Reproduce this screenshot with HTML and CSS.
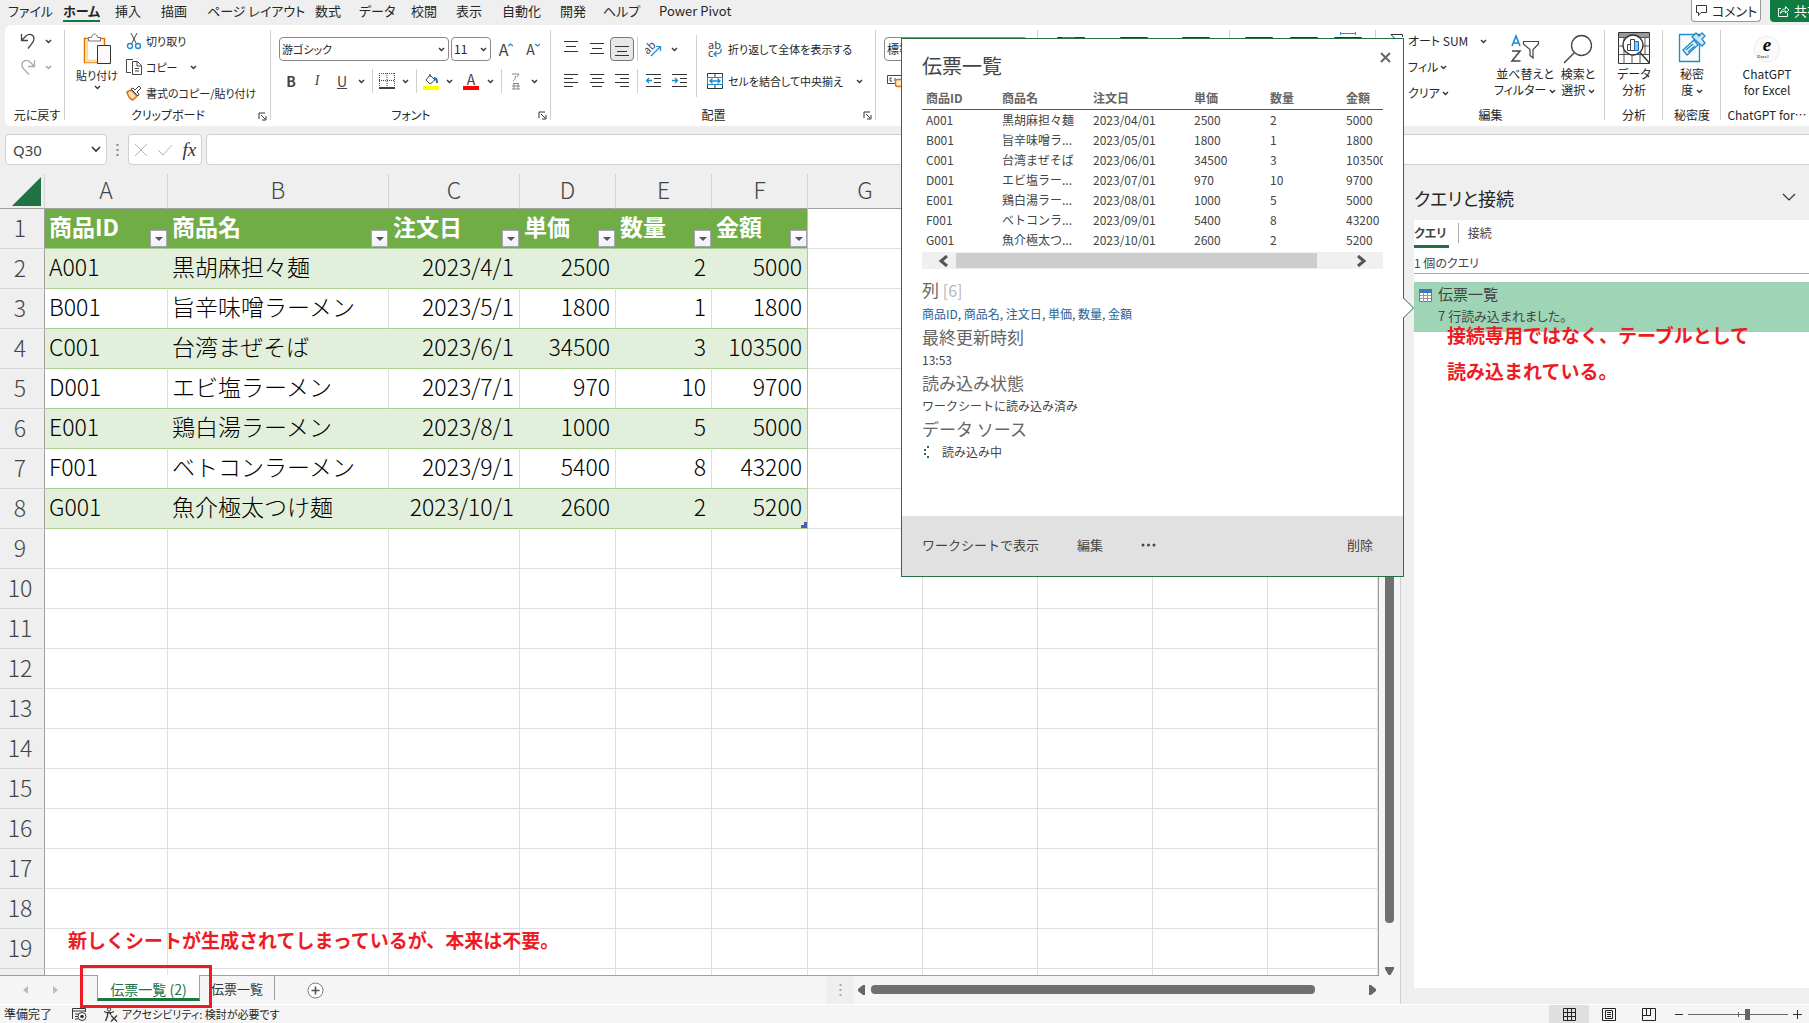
FILE: index.html
```html
<!DOCTYPE html>
<html lang="ja">
<head>
<meta charset="utf-8">
<title>伝票一覧</title>
<link rel="stylesheet" href="styles.css">
</head>
<body>
<svg class="defs" aria-hidden="true">
  <symbol id="chev" viewBox="0 0 7 5"><path d="M1 1l2.500 2.500L6 1" fill="none" stroke="#333" stroke-width="1.400"/></symbol>
  <symbol id="launch" viewBox="0 0 9 9"><path d="M1 7V1h6M3 3l4 4M8 4v4H4" fill="none" stroke="#333"/></symbol>
</svg>

<nav class="topbar">
  <div class="tabs">
    <a href="#">ファイル</a><a href="#" class="on">ホーム</a><a href="#">挿入</a><a href="#">描画</a><a href="#">ページ レイアウト</a><a href="#">数式</a><a href="#">データ</a><a href="#">校閲</a><a href="#">表示</a><a href="#">自動化</a><a href="#">開発</a><a href="#">ヘルプ</a><a href="#">Power Pivot</a>
  </div>
  <div class="actions">
    <button class="comment"><svg width="13" height="13" viewBox="0 0 13 13"><path d="M1.500 1.500h10v7H6l-2.500 3v-3h-2z" fill="none" stroke="#333"/></svg>コメント</button>
    <button class="share"><svg width="13" height="13" viewBox="0 0 13 13"><path d="M4 3.500H1.500v8h9V8M3.500 8.500C4 5 6 4 8.500 4V1.500L12 5 8.500 8V6C6 6 4.500 7 3.500 8.500z" fill="none" stroke="#fff"/></svg>共有</button>
  </div>
</nav>

<section class="ribbon">
  <div class="group g-undo">
    <div class="stack">
      <div class="line"><button class="b20"><svg width="16" height="17" viewBox="0 0 16 17"><path d="M1.500 1v6.500H8M1.500 7.500L6 3c3-3 8-1.500 8 3 0 2.500-1 3.500-6 9.500" fill="none" stroke="#444" stroke-width="1.300"/></svg></button><button class="b20"><svg class="chev"><use href="#chev"/></svg></button></div>
      <div class="line faded"><button class="b20"><svg width="16" height="17" viewBox="0 0 16 17"><path d="M14.500 1v6.500H8M14.500 7.500L10 3C7 0 2 1.500 2 6c0 2.500 1 3.500 7 9.500" fill="none" stroke="#444" stroke-width="1.300"/></svg></button><button class="b20"><svg class="chev"><use href="#chev"/></svg></button></div>
    </div>
    <div class="label">元に戻す</div>
  </div>

  <div class="group g-clip">
    <div class="cols">
      <button class="big"><svg width="28" height="32" viewBox="0 0 28 32"><path d="M1.500 5.500h20v24h-20z" fill="#fff" stroke="#e07000" stroke-width="1.500"/><path d="M3.500 7v21h10" fill="none" stroke="#f9dda0" stroke-width="3"/><path d="M5.500 8V4.500h3C9 2 10 1 11.500 1S14 2 14.500 4.500h3V8z" fill="#fff" stroke="#777"/><path d="M14.500 12.500h13v18h-13z" fill="#fafafa" stroke="#333"/></svg><span>貼り付け</span><svg class="chev"><use href="#chev"/></svg></button>
      <div class="stack">
        <button class="line cmd"><svg width="16" height="18" viewBox="0 0 16 18"><path d="M5 1l5.500 11M11 1L5.500 12" fill="none" stroke="#444"/><circle cx="4" cy="14" r="2.500" fill="none" stroke="#1e8bcd" stroke-width="1.400"/><circle cx="12" cy="14" r="2.500" fill="none" stroke="#1e8bcd" stroke-width="1.400"/></svg>切り取り</button>
        <button class="line cmd"><svg width="16" height="18" viewBox="0 0 16 18"><path d="M5 14.500H.5v-13H7M6.500 3.500h5l4 4v9h-9zM11 3.500V8h4M9 10.500h4M9 13h4" fill="none" stroke="#444"/></svg>コピー<svg class="chev far"><use href="#chev"/></svg></button>
        <button class="line cmd"><svg width="16" height="16" viewBox="0 0 16 16"><path d="M1 7l4-2 6 6-4 4c-3-1-5-4-6-8z" fill="#fbe3c4" stroke="#e07000" stroke-width="1.500"/><path d="M5 4l7 7 1-2-2-2 4-4-2-2-4 4-2-2z" fill="#fff" stroke="#444"/></svg>書式のコピー/貼り付け</button>
      </div>
    </div>
    <div class="label">クリップボード<button class="launch" aria-label="クリップボードの設定"><svg width="9" height="9"><use href="#launch"/></svg></button></div>
  </div>

  <div class="group g-font">
    <div class="two">
      <div class="tools">
        <select class="sel face" aria-label="フォント"><option>游ゴシック</option></select>
        <select class="sel size" aria-label="フォント サイズ"><option>11</option></select>
        <button class="b30"><span class="ltr a1">A</span><svg width="5" height="12" viewBox="0 0 5 12"><path d="M0 3l2.500-2L5 3" fill="none" stroke="#1e8bcd" stroke-width="1.300"/></svg></button><button class="b24"><span class="ltr a2">A</span><svg width="5" height="12" viewBox="0 0 5 12"><path d="M0 1l2.500 2L5 1" fill="none" stroke="#1e8bcd" stroke-width="1.300"/></svg></button>
      </div>
      <div class="tools">
        <button class="b24"><b>B</b></button><button class="b28"><i>I</i></button><button class="b22"><u>U</u></button><button class="b16"><svg class="chev"><use href="#chev"/></svg></button><i class="sep s6"></i><button class="b24"><svg width="16" height="16" viewBox="0 0 16 16"><path d="M.5 0v14M15.500 0v14M8 0v14M0 .5h16M0 7.500h16" fill="none" stroke="#444" stroke-dasharray="1 1"/><path d="M0 15h16" stroke="#000" stroke-width="1.500"/></svg></button><button class="b12"><svg class="chev"><use href="#chev"/></svg></button><i class="sep s10"></i><button class="b20"><svg width="16" height="17" viewBox="0 0 16 17"><path d="M7 1v3M7 2l5 5-5 4-4-4z" fill="#fff" stroke="#444"/><path d="M11 5c2 0 3 2 3 5" fill="none" stroke="#1e6fb8" stroke-width="2"/><path d="M0 13h16v4H0z" fill="#ff0"/></svg></button><button class="b16"><svg class="chev"><use href="#chev"/></svg></button><button class="b28"><span class="fcolor">A</span></button><button class="b10"><svg class="chev"><use href="#chev"/></svg></button><i class="sep s12"></i><button class="b18" aria-label="ふりがな"><svg width="10" height="18" viewBox="0 0 10 18"><path d="M1 2h7L6 5M4.500 4c0 3-1 4-2.500 5M2 11.500h6M1 14h8M1 17h8M3 11v6M7 11v6" fill="none" stroke="#888"/></svg></button><button class="b18"><svg class="chev"><use href="#chev"/></svg></button>
      </div>
    </div>
    <div class="label">フォント<button class="launch" aria-label="フォントの設定"><svg width="9" height="9"><use href="#launch"/></svg></button></div>
  </div>

  <div class="group g-align">
    <div class="cols">
      <div class="two">
        <div class="tools">
          <button class="b26"><svg width="14" height="16" viewBox="0 0 14 16"><path d="M0 .5h14M2 5.500h10M0 10.500h14" stroke="#333"/></svg></button><button class="b26"><svg width="14" height="16" viewBox="0 0 14 16"><path d="M0 2.500h14M2 7.500h10M0 12.500h14" stroke="#333"/></svg></button><button class="b24 pressed"><svg width="14" height="16" viewBox="0 0 14 16"><path d="M0 5.500h14M2 10.500h10M0 14.500h14" stroke="#333"/></svg></button><i class="sep s6"></i><button class="b26"><svg width="17" height="16" viewBox="0 0 17 16"><text x="0" y="10" font-size="11" fill="#444" transform="rotate(-45 6 9)">ab</text><path d="M6 15L15.500 5.500M11 5.500h4.500V10" fill="none" stroke="#1e8bcd" stroke-width="1.200"/></svg></button><button class="b16"><svg class="chev"><use href="#chev"/></svg></button>
        </div>
        <div class="tools">
          <button class="b26"><svg width="14" height="14" viewBox="0 0 14 14"><path d="M0 .5h14M0 4.500h9M0 8.500h14M0 12.500h9" stroke="#333"/></svg></button><button class="b26"><svg width="14" height="14" viewBox="0 0 14 14"><path d="M0 .5h14M2 4.500h10M0 8.500h14M2 12.500h10" stroke="#333"/></svg></button><button class="b24"><svg width="14" height="14" viewBox="0 0 14 14"><path d="M0 .5h14M5 4.500h9M0 8.500h14M5 12.500h9" stroke="#333"/></svg></button><i class="sep s6"></i><button class="b26"><svg width="15" height="14" viewBox="0 0 15 14"><path d="M0 .5h15M8 4.500h7M8 8.500h7M0 12.500h15" stroke="#333"/><path d="M6 6.500H1M3 4L.7 6.500 3 9" fill="none" stroke="#1e8bcd" stroke-width="1.300"/></svg></button><button class="b26"><svg width="15" height="14" viewBox="0 0 15 14"><path d="M0 .5h15M8 4.500h7M8 8.500h7M0 12.500h15" stroke="#333"/><path d="M0 6.500h5M3 4l2.500 2.500L3 9" fill="none" stroke="#1e8bcd" stroke-width="1.300"/></svg></button>
        </div>
      </div>
      <div class="two wraps">
        <button class="tools cmd"><svg width="16" height="17" viewBox="0 0 16 17"><text x="1" y="8" font-size="11" fill="#444">ab</text><text x="1" y="16" font-size="11" fill="#444">c</text><path d="M14 8c1 4-2 5-7 5M9.500 10.500L7 13l2.500 2.500" fill="none" stroke="#1e8bcd" stroke-width="1.400"/></svg>折り返して全体を表示する</button>
        <button class="tools cmd"><svg width="16" height="16" viewBox="0 0 16 16"><path d="M.5.5h15v15H.5zM8 .5V4M8 12v3.500" fill="none" stroke="#333"/><path d="M.5 4.500h15v7H.5z" fill="#fff" stroke="#1e8bcd"/><path d="M3 8h10M5.500 5.500L3 8l2.500 2.500M10.500 5.500L13 8l-2.500 2.500" fill="none" stroke="#1e8bcd" stroke-width="1.300"/></svg>セルを結合して中央揃え<svg class="chev far"><use href="#chev"/></svg></button>
      </div>
    </div>
    <div class="label">配置<button class="launch" aria-label="配置の設定"><svg width="9" height="9"><use href="#launch"/></svg></button></div>
  </div>

  <div class="group g-num">
    <div class="two">
      <div class="tools"><select class="sel num" aria-label="表示形式"><option>標準</option></select></div>
      <div class="tools"><button class="b26"><svg width="20" height="14" viewBox="0 0 20 14"><path d="M.5 1.500h17v8H.5zM5 4H3v3h2M8 4v3" fill="none" stroke="#444"/><rect x="8.500" y="5.500" width="10" height="7" rx="2" fill="#fde8cf" stroke="#e07000" stroke-width="1.400"/></svg></button></div>
    </div>
  </div>
  <div class="group g-style">
    <div class="peeks"><svg width="28" height="26"><path d="M.5.5h27v25H.5z" fill="none" stroke="#333"/><path d="M5 0h13v6H5z" fill="#e0392d"/></svg><svg width="28" height="26"><path d="M.5.5h27v25H.5z" fill="none" stroke="#333"/></svg><svg width="28" height="26"><path d="M.5.5h27v25H.5z" fill="none" stroke="#333"/></svg></div>
  </div>
  <div class="group g-cell">
    <div class="peeks"><svg width="28" height="26"><path d="M.5.5h27v25H.5z" fill="none" stroke="#333"/></svg><svg width="28" height="26"><path d="M.5.5h27v25H.5z" fill="none" stroke="#333"/></svg><svg class="tall" width="28" height="31"><path d="M.5 5.500h27v25H.5z" fill="none" stroke="#333"/><path d="M6.500 0v3M21.500 0v3M6 1.500h16" stroke="#1e8bcd"/></svg></div>
  </div>
  <div class="group g-edit">
    <div class="cols">
      <div class="stack">
        <button class="line cmd"><svg width="14" height="14" viewBox="0 0 14 14"><path d="M12.500 3V.5H1L7 7l-6 6.500h11.500V11" fill="none" stroke="#333"/></svg>オート SUM<svg class="chev"><use href="#chev"/></svg></button>
        <button class="line cmd"><svg width="14" height="14" viewBox="0 0 14 14"><path d="M.5.500h12v12H.5zM6.500 3v7M4 7l2.500 3L9 7" fill="none" stroke="#333"/></svg>フィル<svg class="chev near"><use href="#chev"/></svg></button>
        <button class="line cmd"><svg width="14" height="14" viewBox="0 0 14 14"><path d="M1 9l7-7 5 4-7 7H4z" fill="none" stroke="#333"/></svg>クリア<svg class="chev near"><use href="#chev"/></svg></button>
      </div>
      <button class="big sort"><svg width="30" height="30" viewBox="0 0 30 30"><path d="M2 12L6 2l4 10M3.500 9h5" fill="none" stroke="#1e8bcd" stroke-width="1.600"/><path d="M2 17h8L2 27h8.500" fill="none" stroke="#444" stroke-width="1.500"/><path d="M13.500 7.500h15V10l-5.500 5.500V24l-3-2.500v-6L13.500 10z" fill="none" stroke="#444" stroke-width="1.200"/></svg><span>並べ替えと<br>フィルター <svg class="chev"><use href="#chev"/></svg></span></button>
      <button class="big find"><svg width="30" height="30" viewBox="0 0 30 30"><circle cx="18.500" cy="11.500" r="10" fill="none" stroke="#444" stroke-width="1.300"/><path d="M11 19L1 29" stroke="#444" stroke-width="1.400"/></svg><span>検索と<br>選択 <svg class="chev"><use href="#chev"/></svg></span></button>
    </div>
    <div class="label">編集</div>
  </div>
  <div class="group g-one">
    <button class="big"><svg width="32" height="32" viewBox="0 0 32 32"><path d="M.5.5h31v31H.5z" fill="#fff" stroke="#333"/><path d="M1 1h30v4H1z" fill="#999"/><path d="M0 5.500h32M0 14h32M0 22.500h32M6 23v9M14 23v9M22 23v9M6 5v18M27 5v18" stroke="#555"/><circle cx="15" cy="13" r="10" fill="#fff" stroke="#333" stroke-width="1.300"/><path d="M9.500 12.500h3v6h-3zM12.500 7.500h4v11h-4z" fill="#fff" stroke="#444"/><path d="M16.500 9.500h4v9h-4z" fill="#8fc3ee" stroke="#1e6fb8"/><path d="M22 20.500L31.500 31" stroke="#333" stroke-width="1.500"/></svg><span>データ<br>分析</span></button>
    <div class="label">分析</div>
  </div>
  <div class="group g-one">
    <button class="big"><svg width="28" height="32" viewBox="0 0 28 32"><path d="M1.500 2.500h20v27h-20z" fill="#fafafa" stroke="#1e8bcd" stroke-width="1.300"/><path d="M5 18L16 8l4 5L9 23z" fill="#e8f3fb" stroke="#1e8bcd" stroke-width="1.300"/><path d="M8 18l7-6M10 20l7-6M14 5l4-4 3 3 3-3 3 3-3 3 3 4-3 3z" fill="#cfe6f7" stroke="#1e8bcd" stroke-width="1.300"/></svg><span>秘密<br>度 <svg class="chev"><use href="#chev"/></svg></span></button>
    <div class="label">秘密度</div>
  </div>
  <div class="group g-gpt">
    <button class="big"><svg width="28" height="32" viewBox="0 0 28 32"><circle cx="14" cy="17" r="13" fill="#fafafa" stroke="#ececec"/><text x="14" y="19" font-size="19" font-weight="bold" font-style="italic" text-anchor="middle" class="serif">e</text><text x="10" y="26" font-size="5" text-anchor="middle" class="serif">Excel</text></svg><span>ChatGPT<br>for Excel</span></button>
    <div class="label">ChatGPT for…</div>
  </div>
</section>

<div class="fbar">
  <div class="namebox"><input aria-label="名前ボックス" value="Q30"><button aria-label="名前の一覧"><svg width="10" height="7" viewBox="0 0 10 7"><path d="M1 1l4 4 4-4" fill="none" stroke="#333" stroke-width="1.600"/></svg></button></div>
  <svg class="grip" width="3" height="12"><path d="M1.500 0v12" stroke="#888" stroke-width="2" stroke-dasharray="2 3"/></svg>
  <div class="fx"><button aria-label="キャンセル"><svg width="14" height="14"><path d="M1 1l12 12M13 1L1 13" stroke="#b5b5b5"/></svg></button><button aria-label="入力"><svg width="16" height="12"><path d="M1 6l5 5 9-10" fill="none" stroke="#b5b5b5"/></svg></button><button class="fxi">fx</button></div>
  <input class="formula" aria-label="数式バー">
</div>

<div class="work">
  <main class="book">
    <div class="gridrow">
      <div class="grid">
        <table class="sheet">
          <colgroup><col class="c0"><col class="cA"><col class="cB"><col class="cC"><col class="cD"><col class="cD"><col class="cD"><col class="cG"><col class="cG"><col class="cG"><col class="cG"><col></colgroup>
          <thead><tr><th class="corner"><svg width="29" height="29"><path d="M29 0v29H0z" fill="#217346"/></svg></th><th>A</th><th>B</th><th>C</th><th>D</th><th>E</th><th>F</th><th>G</th><th>H</th><th>I</th><th>J</th><th>K</th></tr></thead>
          <tbody>
            <tr class="hd"><th>1</th><td><div>商品ID<button aria-label="商品IDの絞り込み"></button></div></td><td><div>商品名<button aria-label="商品名の絞り込み"></button></div></td><td><div>注文日<button aria-label="注文日の絞り込み"></button></div></td><td><div>単価<button aria-label="単価の絞り込み"></button></div></td><td><div>数量<button aria-label="数量の絞り込み"></button></div></td><td><div>金額<button aria-label="金額の絞り込み"></button></div></td><td></td><td></td><td></td><td></td><td></td></tr>
            <tr class="rec band"><th>2</th><td>A001</td><td>黒胡麻担々麺</td><td>2023/4/1</td><td>2500</td><td>2</td><td>5000</td><td></td><td></td><td></td><td></td><td></td></tr>
            <tr class="rec"><th>3</th><td>B001</td><td>旨辛味噌ラーメン</td><td>2023/5/1</td><td>1800</td><td>1</td><td>1800</td><td></td><td></td><td></td><td></td><td></td></tr>
            <tr class="rec band"><th>4</th><td>C001</td><td>台湾まぜそば</td><td>2023/6/1</td><td>34500</td><td>3</td><td>103500</td><td></td><td></td><td></td><td></td><td></td></tr>
            <tr class="rec"><th>5</th><td>D001</td><td>エビ塩ラーメン</td><td>2023/7/1</td><td>970</td><td>10</td><td>9700</td><td></td><td></td><td></td><td></td><td></td></tr>
            <tr class="rec band"><th>6</th><td>E001</td><td>鶏白湯ラーメン</td><td>2023/8/1</td><td>1000</td><td>5</td><td>5000</td><td></td><td></td><td></td><td></td><td></td></tr>
            <tr class="rec"><th>7</th><td>F001</td><td>ベトコンラーメン</td><td>2023/9/1</td><td>5400</td><td>8</td><td>43200</td><td></td><td></td><td></td><td></td><td></td></tr>
            <tr class="rec band last"><th>8</th><td>G001</td><td>魚介極太つけ麺</td><td>2023/10/1</td><td>2600</td><td>2</td><td>5200</td><td></td><td></td><td></td><td></td><td></td></tr>
            <tr><th>9</th><td></td><td></td><td></td><td></td><td></td><td></td><td></td><td></td><td></td><td></td><td></td></tr>
            <tr><th>10</th><td></td><td></td><td></td><td></td><td></td><td></td><td></td><td></td><td></td><td></td><td></td></tr>
            <tr><th>11</th><td></td><td></td><td></td><td></td><td></td><td></td><td></td><td></td><td></td><td></td><td></td></tr>
            <tr><th>12</th><td></td><td></td><td></td><td></td><td></td><td></td><td></td><td></td><td></td><td></td><td></td></tr>
            <tr><th>13</th><td></td><td></td><td></td><td></td><td></td><td></td><td></td><td></td><td></td><td></td><td></td></tr>
            <tr><th>14</th><td></td><td></td><td></td><td></td><td></td><td></td><td></td><td></td><td></td><td></td><td></td></tr>
            <tr><th>15</th><td></td><td></td><td></td><td></td><td></td><td></td><td></td><td></td><td></td><td></td><td></td></tr>
            <tr><th>16</th><td></td><td></td><td></td><td></td><td></td><td></td><td></td><td></td><td></td><td></td><td></td></tr>
            <tr><th>17</th><td></td><td></td><td></td><td></td><td></td><td></td><td></td><td></td><td></td><td></td><td></td></tr>
            <tr><th>18</th><td></td><td></td><td></td><td></td><td></td><td></td><td></td><td></td><td></td><td></td><td></td></tr>
            <tr><th>19</th><td></td><td></td><td></td><td></td><td></td><td></td><td></td><td></td><td></td><td></td><td></td></tr>
            <tr><th></th><td></td><td></td><td></td><td></td><td></td><td></td><td></td><td></td><td></td><td></td><td></td></tr>
          </tbody>
        </table>
      </div>
      <div class="vscroll"><div class="vthumb"></div><svg width="9" height="8"><path d="M0 0h9v2L5.500 8h-2L0 2z" fill="#666"/></svg></div>
    </div>
    <p class="note sheetnote">新しくシートが生成されてしまっているが、本来は不要。</p>
    <div class="sheetbar">
      <button class="nav" aria-label="前のシート"><svg width="6" height="8"><path d="M5 0v8L0 4z" fill="#bbb"/></svg></button><button class="nav" aria-label="次のシート"><svg width="6" height="8"><path d="M0 0v8l5-4z" fill="#bbb"/></svg></button>
      <a href="#" class="stab cur">伝票一覧 (2)</a><a href="#" class="stab">伝票一覧</a>
      <button class="add" aria-label="新しいシート"><svg width="17" height="17"><circle cx="8.500" cy="8.500" r="7.500" fill="#fff" stroke="#777"/><path d="M4.500 8.500h8M8.500 4.500v8" stroke="#555" stroke-width="1.600"/></svg></button>
      <div class="hscroll"><svg class="split" width="3" height="12"><path d="M1.500 0v12" stroke="#aaa" stroke-width="2" stroke-dasharray="2 3"/></svg><svg width="8" height="10"><path d="M7 0v10H5L0 6V4l5-4z" fill="#666"/></svg><div class="htrack"><div class="hthumb"></div></div><svg width="8" height="10"><path d="M0 0v10h2l5-4V4L2 0z" fill="#666"/></svg></div>
      <div class="redbox"></div>
    </div>
  </main>

  <aside class="pane">
    <header><h1>クエリと接続</h1><button aria-label="作業ウィンドウのオプション"><svg width="14" height="9"><path d="M1 1l6 6 6-6" fill="none" stroke="#333" stroke-width="1.200"/></svg></button></header>
    <div class="pbody">
      <div class="ptabs"><a href="#" class="on">クエリ</a><a href="#">接続</a></div>
      <p class="count">1 個のクエリ</p>
      <div class="query">
        <svg width="13" height="13"><path d="M.5.5h12v12H.5z" fill="#fff" stroke="#777"/><path d="M0 0h13v4H0z" fill="#3d78b8"/><path d="M4.500 4v9M8.500 4v9M1 6.500h11M1 9.500h11" stroke="#999"/></svg>
        <div><h2>伝票一覧</h2><p>7 行読み込まれました。</p></div>
      </div>
      <p class="note panenote">接続専用ではなく、テーブルとして<br>読み込まれている。</p>
    </div>
  </aside>
</div>

<footer class="status">
  <span>準備完了</span>
  <svg class="rec-ic" width="15" height="14"><path d="M.5 12V1.500h13V5M1 4h12M3 7h4M3 9.500h3M3 12h3" fill="none" stroke="#333"/><circle cx="10" cy="9.500" r="4" fill="#fff" stroke="#333"/><circle cx="10" cy="9.500" r="1.800" fill="#333"/></svg>
  <svg class="acc-ic" width="16" height="15"><circle cx="6" cy="2.500" r="1.700" fill="none" stroke="#333"/><path d="M1 4.500c3 1.500 7 1.500 10 0M4.500 6v3L2.500 14M7.500 6v2" fill="none" stroke="#333" stroke-width="1.300"/><path d="M8 8.500l6 6M14 8.500l-6 6" stroke="#333" stroke-width="1.300"/></svg>
  <span class="acc">アクセシビリティ: 検討が必要です</span>
  <div class="views">
    <button class="view on" aria-label="標準"><svg width="13" height="13"><path d="M.5.5h12v12H.5zM4.500 0v13M8.500 0v13M0 4.500h13M0 8.500h13" fill="none" stroke="#222"/></svg></button><button class="view" aria-label="ページ レイアウト"><svg width="14" height="13"><path d="M.5.5h13v12H.5zM3.500 2.500h7v8h-7zM5 4.500h4M5 6.500h4M5 8.500h4" fill="none" stroke="#222"/></svg></button><button class="view" aria-label="改ページ プレビュー"><svg width="14" height="13"><path d="M.5.5h13v12H.5zM4.500 0v7M0 7.500h9M8.500 0v8" fill="none" stroke="#222"/></svg></button>
  </div>
  <button class="zm" aria-label="縮小"><svg width="8" height="9"><path d="M0 4.500h8" stroke="#333"/></svg></button><input class="zoom" type="range" min="0" max="100" value="60" aria-label="ズーム"><button class="zm" aria-label="拡大"><svg width="9" height="9"><path d="M0 4.500h9M4.500 0v9" stroke="#333"/></svg></button>
</footer>

<section class="card" role="dialog" aria-label="伝票一覧">
  <svg class="tip" width="12" height="22"><path d="M0 0v1l10 10L0 21v1z" fill="#fff"/><path d="M.5 1l10 10-10 10" fill="none" stroke="#217346"/></svg>
  <div class="cmain">
    <header><h2>伝票一覧</h2><button aria-label="閉じる"><svg width="11" height="11"><path d="M1 1l9 9M10 1l-9 9" stroke="#666" stroke-width="2"/></svg></button></header>
    <table class="preview">
      <colgroup><col class="p1"><col class="p2"><col class="p3"><col class="p1"><col class="p1"><col></colgroup>
      <thead><tr><th>商品ID</th><th>商品名</th><th>注文日</th><th>単価</th><th>数量</th><th>金額</th></tr></thead>
      <tbody>
        <tr><td>A001</td><td>黒胡麻担々麺</td><td>2023/04/01</td><td>2500</td><td>2</td><td>5000</td></tr>
        <tr><td>B001</td><td>旨辛味噌ラ...</td><td>2023/05/01</td><td>1800</td><td>1</td><td>1800</td></tr>
        <tr><td>C001</td><td>台湾まぜそば</td><td>2023/06/01</td><td>34500</td><td>3</td><td>103500</td></tr>
        <tr><td>D001</td><td>エビ塩ラー...</td><td>2023/07/01</td><td>970</td><td>10</td><td>9700</td></tr>
        <tr><td>E001</td><td>鶏白湯ラー...</td><td>2023/08/01</td><td>1000</td><td>5</td><td>5000</td></tr>
        <tr><td>F001</td><td>ベトコンラ...</td><td>2023/09/01</td><td>5400</td><td>8</td><td>43200</td></tr>
        <tr><td>G001</td><td>魚介極太つ...</td><td>2023/10/01</td><td>2600</td><td>2</td><td>5200</td></tr>
      </tbody>
    </table>
    <div class="pscroll"><svg width="10" height="12"><path d="M9 1L3 6l6 5" fill="none" stroke="#555" stroke-width="3"/></svg><div class="pthumb"></div><svg width="10" height="12"><path d="M1 1l6 5-6 5" fill="none" stroke="#555" stroke-width="3"/></svg></div>
    <h3>列 <span>[6]</span></h3>
    <p class="links"><a href="#">商品ID</a>, <a href="#">商品名</a>, <a href="#">注文日</a>, <a href="#">単価</a>, <a href="#">数量</a>, <a href="#">金額</a></p>
    <h3>最終更新時刻</h3>
    <p>13:53</p>
    <h3>読み込み状態</h3>
    <p>ワークシートに読み込み済み</p>
    <h3>データ ソース</h3>
    <p class="loading"><svg width="6" height="12"><path d="M3 0h2v2H3zM0 3h2v2H0zM0 7h2v2H0zM3 10h2v2H3z" fill="#217346"/></svg>読み込み中</p>
  </div>
  <footer><button>ワークシートで表示</button><button>編集</button><button aria-label="その他"><svg width="15" height="4"><circle cx="2" cy="2" r="1.500" fill="#444"/><circle cx="7.500" cy="2" r="1.500" fill="#444"/><circle cx="13" cy="2" r="1.500" fill="#444"/></svg></button><button class="del">削除</button></footer>
</section>
</body>
</html>
```
FILE: styles.css
```css
* { box-sizing: border-box; }
body {
  margin: 0; height: 100vh; position: relative; overflow: hidden;
  display: flex; flex-direction: column;
  background: #efefef; color: #262626;
  font: 12px/16px "Noto Sans CJK JP", sans-serif;
  font-feature-settings: "palt";
}
h1, h2, h3, p { margin: 0; font-weight: 400; }
a { color: inherit; text-decoration: none; }
button { border: 0; padding: 0; margin: 0; background: none; font: inherit; color: inherit; font-feature-settings: inherit; }
svg { flex: none; display: block; }
.defs { position: absolute; width: 0; height: 0; }
.chev { width: 7px; height: 5px; }
.serif { font-family: "Liberation Serif", serif; }

/* Tab strip */
.topbar { height: 25px; flex: none; display: flex; justify-content: space-between; overflow: hidden; }
.tabs { display: grid; grid-template-columns: 55px 52px 46px 46px 108px 44px 52px 45px 46px 58px 43px 56px 80px; padding-left: 8px; font-size: 13px; line-height: 22px; white-space: nowrap; }
.tabs a { justify-self: start; height: 22px; }
.tabs .on { font-weight: 700; border-bottom: 2px solid #107c41; }
.actions { display: flex; gap: 9px; margin-right: -28px; font-size: 13px; line-height: 20px; }
.actions button { height: 22px; display: flex; align-items: center; justify-content: center; gap: 4px; border-radius: 0 0 4px 4px; white-space: nowrap; }
.comment { width: 70px; background: #fff; border: 1px solid #999; border-top: 0; }
.actions .share { width: 67px; background: #107c41; color: #fff; justify-content: flex-start; padding-left: 7px; }

/* Ribbon */
.ribbon { height: 101px; flex: none; margin-left: 5px; background: #fff; border-radius: 6px 0 0 6px; display: flex; overflow: hidden; }
.group { flex: none; display: flex; flex-direction: column; justify-content: space-between; position: relative; white-space: nowrap; }
.group:not(:last-child)::after { content: ""; position: absolute; right: 0; top: 5px; bottom: 6px; width: 1px; background: #d0d0d0; }
.g-undo { width: 60px; }
.g-clip { width: 206px; }
.g-font { width: 280px; }
.g-align { width: 325px; }
.g-num { width: 162px; }
.g-style { width: 192px; }
.g-cell { width: 146px; }
.g-edit { width: 229px; }
.g-one { width: 58px; }
.g-gpt { flex: 1; min-width: 88px; }
.g-gpt, .g-undo .label { padding-left: 4px; }
.label { height: 21px; display: flex; justify-content: center; align-items: center; padding-bottom: 2px; position: relative; }
.launch { position: absolute; right: 4px; top: 6px; }
.stack { display: flex; flex-direction: column; padding-top: 3px; }
.line { height: 26px; display: flex; align-items: center; }
.cols { display: flex; }
.cmd { gap: 4px; }
.g-clip .cmd, .g-clip .big, .wraps .cmd { font-size: 11px; }
.g-undo .stack { padding-left: 13px; }
.faded { opacity: .45; }
.big { display: flex; flex-direction: column; align-items: center; padding-top: 7px; gap: 2px; text-align: center; }
.big > span .chev { display: inline-block; vertical-align: middle; }
.g-clip .big { width: 61px; padding: 8px 0 0 3px; }
.far { margin-left: 8px; }
.near { margin-left: -2px; }
.two { padding-top: 8px; display: flex; flex-direction: column; gap: 0; }
.tools { height: 32px; display: flex; align-items: center; }
.g-font .two, .g-num .two { padding-left: 8px; }
.tools button, button.b20 { display: flex; align-items: center; justify-content: center; height: 24px; }
.b10 { width: 10px; } .b12 { width: 12px; } .b16 { width: 16px; } .b18 { width: 18px; }
.b20 { width: 20px; } .b22 { width: 22px; } .b24 { width: 24px; } .b26 { width: 26px; }
.b28 { width: 28px; } .b30 { width: 30px; }
.tools b, .tools button i, .tools u { font-size: 14px; color: #444; }
.tools button i { font-family: "Liberation Serif", serif; }
.sep { align-self: stretch; margin: 4px 0; background: linear-gradient(#d0d0d0, #d0d0d0) center / 1px 100% no-repeat; }
.s6 { width: 6px; } .s10 { width: 10px; } .s12 { width: 12px; }
.sel { height: 24px; border: 1px solid #8a8a8a; border-radius: 4px; padding: 0 2px; font: inherit; color: inherit; font-feature-settings: "palt"; appearance: none; background: #fff url("data:image/svg+xml,%3Csvg xmlns='http://www.w3.org/2000/svg' width='7' height='5'%3E%3Cpath d='M1 1l2.500 2.500L6 1' fill='none' stroke='%23333' stroke-width='1.400'/%3E%3C/svg%3E") right 3px center no-repeat; }
.face { width: 170px; font-size: 11px; }
.size { width: 40px; margin-left: 2px; }
.num { width: 144px; }
.ltr { color: #444; } .a1 { font-size: 16px; } .a2 { font-size: 14px; }
.fcolor { font-size: 14px; line-height: 13px; color: #444; border-bottom: 4px solid #f00; width: 16px; }
.tools .pressed { background: #e8e8e8; border: 1px solid #777; border-radius: 4px; }
.g-align .two:first-child { width: 145px; padding-left: 7px; border: 0; }
.wraps { padding-left: 11px; background: linear-gradient(#d0d0d0, #d0d0d0) 0 100% / 1px 62px no-repeat; }
.wraps .cmd { gap: 5px; justify-content: flex-start; height: 32px; }
.peeks { display: flex; align-items: flex-end; height: 38px; }
.g-style .peeks { padding: 0 20px 0 19px; justify-content: space-between; }
.g-cell .peeks { padding: 0 14px 0 15px; justify-content: space-between; }
.g-edit .stack { width: 120px; padding-left: 14px; }
.g-edit .line:first-child .chev { margin-left: 8px; }
.sort { width: 58px; } .find { width: 48px; }
.g-edit .big { padding-top: 9px; }

/* Formula bar */
.fbar { flex: none; height: 48px; padding: 8px 0 9px 5px; display: flex; align-items: stretch; }
.fbar > div, .formula { background: #fff; border: 1px solid #d0d0d0; border-radius: 4px; }
.namebox { width: 102px; display: flex; align-items: center; padding: 0 5px 0 7px; }
.namebox input { flex: 1; width: 0; border: 0; padding: 0; font: 15px "Noto Sans", sans-serif; color: #444; background: none; }
.grip { align-self: center; margin: 0 9px 0 9px; }
.fx { width: 74px; display: flex; align-items: center; justify-content: space-around; }
.fxi { font: italic 19px/20px "Liberation Serif", serif; color: #333; }
.formula { flex: 1; min-width: 0; margin-left: 4px; border-right: 0; border-radius: 4px 0 0 4px; }

/* Workbook */
.work { flex: 1; min-height: 0; display: flex; }
.book { flex: 1; min-width: 0; display: flex; flex-direction: column; position: relative; }
.gridrow { flex: 1; min-height: 0; display: flex; }
.grid { flex: 1; min-width: 0; overflow: hidden; border-bottom: 1px solid #9f9f9f; border-right: 1px solid #9f9f9f; }
.sheet { width: 100%; table-layout: fixed; border-collapse: separate; border-spacing: 0; background: #fff; font-size: 23px; line-height: 28px; font-weight: 300; color: #000; font-feature-settings: normal; }
.c0 { width: 45px; } .cA { width: 123px; } .cB { width: 221px; } .cC { width: 131px; } .cD { width: 96px; } .cG { width: 115px; }
.sheet th { background: #efefef; color: #444; font-weight: 300; padding: 0; border-right: 1px solid #d4d4d4; }
.sheet thead th { height: 35px; border-bottom: 1px solid #9f9f9f; padding-bottom: 4px; }
.sheet tbody th { border-right-color: #9f9f9f; border-bottom: 1px solid #d4d4d4; padding: 0 4px 4px 0; }
.sheet thead .corner { padding: 0 0 0 12px; }
.sheet td { height: 40px; padding: 0 5px 5px 4px; border-right: 1px solid #dfdfdf; border-bottom: 1px solid #dfdfdf; white-space: nowrap; overflow: hidden; }
.rec td:nth-child(n+4):nth-child(-n+7) { text-align: right; }
.rec td:nth-child(-n+7) { border-bottom-color: #a9d08e; }
.band td:nth-child(-n+7) { background: #e2efda; border-right-color: #e2efda; }
.sheet .rec td:nth-child(7), .sheet .hd td:nth-child(7) { border-right-color: #a9d08e; }
.hd td:nth-child(-n+7) { background: #70ad47; color: #fff; font-weight: 700; padding: 0 0 0 4px; border-right-color: #70ad47; border-bottom-color: #a9d08e; }
.hd td div { height: 39px; line-height: 35px; display: flex; justify-content: space-between; }
.hd button { width: 17px; height: 17px; margin-bottom: 1px; align-self: flex-end; flex: none; border: 1px solid #a6a6b4; background: linear-gradient(#fff, #eef0f6); display: grid; place-items: center; }
.hd button::after { content: ""; border: 4px solid transparent; border-top-color: #555; border-bottom: 0; }
.sheet .last td:nth-child(7) { background: linear-gradient(#4a5bb8, #4a5bb8) right bottom / 6px 3px no-repeat, linear-gradient(#4a5bb8, #4a5bb8) right bottom / 3px 6px no-repeat, #e2efda; }
.vscroll { width: 21px; background: #f5f5f5; display: flex; flex-direction: column; align-items: center; justify-content: space-between; padding: 35px 0 1px; }
.vthumb { width: 9px; height: 714px; border-radius: 4px; background: #707070; }
.note { color: #ed1c24; font-size: 19px; font-weight: 700; line-height: 36px; font-feature-settings: normal; white-space: nowrap; }
.sheetnote { position: absolute; left: 68px; bottom: 46px; }
.sheetbar { flex: none; height: 28px; background: #f5f5f5; display: flex; align-items: center; position: relative; font-size: 13px; }
.nav { width: 30px; display: flex; justify-content: center; }
.nav:first-child { margin-left: 11px; }
.stab { height: 24px; line-height: 26px; padding: 0 11px; align-self: flex-start; color: #333; white-space: nowrap; }
.cur { margin: -1px 0 0 26px; width: 103px; padding: 0; text-align: center; background: #fff; color: #217346; border: 1px solid #9f9f9f; border-top: 0; border-bottom: 3px solid #217346; height: 26px; line-height: 28px; font-size: 14px; font-feature-settings: normal; }
.cur + .stab { border-right: 1px solid #9f9f9f; }
.add { margin-left: 32px; }
.hscroll { margin-left: auto; width: 574px; height: 28px; display: flex; align-items: center; padding: 0 23px 1px 13px; background: linear-gradient(90deg, #efefef 28px, #f5f5f5 28px); }
.split { margin-right: 16px; }
.htrack { flex: 1; margin: 0 5px; }
.hthumb { width: 90%; height: 9px; border-radius: 4px; background: #707070; }
.redbox { position: absolute; left: 80px; top: -11px; width: 132px; height: 43px; border: 3px solid #ed1c24; z-index: 2; }

/* Queries pane */
.pane { flex: none; width: 409px; padding: 0 0 16px 13px; border-left: 1px solid #d0d0d0; background: #efefef; display: flex; flex-direction: column; }
.pane header { height: 46px; display: flex; align-items: center; justify-content: space-between; padding: 2px 13px 0 0; }
.pane h1 { font-size: 18px; line-height: 24px; }
.pane header button { align-self: flex-start; margin-top: 17px; }
.pbody { flex: 1; background: #fff; position: relative; color: #444; }
.ptabs { height: 35px; padding-top: 3px; display: flex; line-height: 20px; }
.ptabs .on { font-weight: 700; border-bottom: 3px solid #217346; height: 25px; padding-right: 2px; }
.ptabs a + a { margin-left: 9px; padding-left: 9px; height: 20px; border-left: 1px solid #aaa; }
.count { line-height: 16px; border-bottom: 1px solid #aaa; height: 19px; }
.query { margin-top: 8px; height: 50px; background: #9fd5b7; display: flex; gap: 6px; padding: 1px 0 0 5px; }
.query svg { margin-top: 6px; }
.query h2 { font-size: 15px; line-height: 22px; font-feature-settings: normal; }
.query p { font-size: 13px; line-height: 21px; }
.panenote { position: absolute; left: 33px; top: 97px; }

/* Status bar */
.status { flex: none; height: 19px; border-top: 1px solid #fff; background: #f5f5f5; display: flex; align-items: center; padding: 0 8px 0 4px; white-space: nowrap; }
.rec-ic { margin-left: 20px; }
.acc-ic { margin: 0 3px 0 16px; }
.acc { font-size: 11px; }
.views { margin-left: auto; margin-right: 6px; display: flex; height: 18px; }
.view { width: 40px; display: grid; place-items: center; }
.view.on { background: #dfdfdf; }
.zm { width: 8px; }
.zoom { appearance: none; width: 100px; height: 12px; margin: 0 5px; background: linear-gradient(#666, #666) center / 100% 1px no-repeat, linear-gradient(#666, #666) 50px 50% / 1px 5px no-repeat; }
.zoom::-webkit-slider-thumb { appearance: none; width: 5px; height: 11px; background: #666; }

/* Query details card */
.card { position: absolute; right: 405px; top: 38px; width: 503px; height: 539px; background: #fff; border: 1px solid #217346; color: #444; display: flex; flex-direction: column; justify-content: space-between; z-index: 3; }
.tip { position: absolute; left: 100%; top: 258px; }
.cmain { padding: 13px 20px 0; }
.cmain header { display: flex; justify-content: space-between; height: 35px; }
.cmain h2 { font-size: 20px; line-height: 28px; }
.cmain header button { align-self: flex-start; margin: 0 -8px 0 0; }
.preview { width: 100%; table-layout: fixed; border-collapse: separate; border-spacing: 0; }
.p1 { width: 76px; } .p2 { width: 91px; } .p3 { width: 101px; }
.preview th { text-align: left; color: #666; height: 23px; border-bottom: 1px solid #217346; padding: 0 0 1px 4px; }
.preview td { height: 20px; line-height: 20px; padding: 0 0 0 4px; overflow: hidden; white-space: nowrap; }
.pscroll { margin: 2px 0 8px; height: 17px; background: #f0f0f0; display: flex; align-items: center; padding: 0 16px; }
.pthumb { width: 361px; height: 15px; background: #cdcdcd; margin: 0 auto 0 8px; }
.cmain h3 { font-size: 17px; line-height: 25px; color: #666; }
.cmain h3 span { color: #b5b5b5; font-size: 16px; }
.cmain p { line-height: 21px; }
.cmain, .card footer { font-feature-settings: normal; }
.links a { color: #2a6099; }
.loading { display: flex; align-items: center; gap: 12px; padding-left: 2px; }
.card footer { height: 60px; background: #e1e1e1; padding: 0 30px 2px 20px; display: flex; align-items: center; gap: 38px; font-size: 13px; }
.del { margin-left: auto; }
```
